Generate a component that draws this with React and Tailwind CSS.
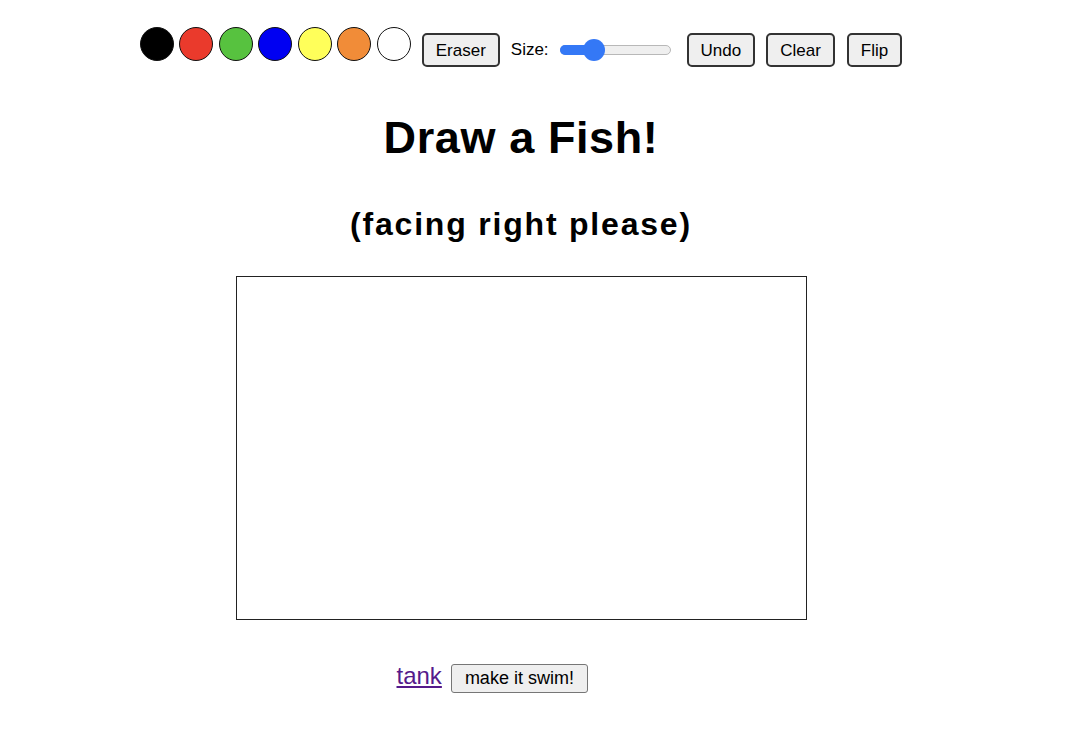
const COLORS = ["#000000", "#ea3a2c", "#57c23f", "#0000f2", "#ffff5a", "#f18c38", "#ffffff"]

const ToolButton = ({ children, className = "" }) => (
  <button
    className={`h-[34px] px-3 bg-[#efefef] border-2 border-[#333] rounded-[5px] text-[17px] leading-none text-black ${className}`}
  >
    {children}
  </button>
)

// thumb position in px from the left of the track
const SizeSlider = ({ offset = 23 }) => (
  <div className="relative ml-[11px] w-[111px] h-[22px] flex items-center">
    <div className="w-full h-[10px] rounded-full bg-[#efefef] border border-[#b8b8b8]" />
    <div className="absolute left-0 h-[10px] rounded-l-full bg-[#3478f6]" style={{ width: offset + 11 }} />
    <div className="absolute w-[22px] h-[22px] rounded-full bg-[#3478f6]" style={{ left: offset }} />
  </div>
)

export default function App() {
  return (
    <div className="w-[1042px] min-h-[731px] bg-white flex flex-col items-center font-['Liberation_Sans',Arial,sans-serif] text-black">
      <div className="flex items-center pt-[27px]">
        <div className="flex gap-[5.5px] mb-[12px]">
          {COLORS.map((c) => (
            <div key={c} className="w-[34px] h-[34px] rounded-full border border-[#111]" style={{ background: c }} />
          ))}
        </div>
        <ToolButton className="ml-[11px]">Eraser</ToolButton>
        <span className="ml-[11px] text-[17px]">Size:</span>
        <SizeSlider offset={23} />
        <ToolButton className="ml-[16px]">Undo</ToolButton>
        <ToolButton className="ml-[11px]">Clear</ToolButton>
        <ToolButton className="ml-[12px]">Flip</ToolButton>
      </div>

      <h1 className="mt-[39px] text-[45px] leading-[52px] font-bold tracking-[0.6px]">Draw a Fish!</h1>
      <h2 className="mt-[40px] text-[32px] leading-[40px] font-bold tracking-[1.8px]">(facing right please)</h2>

      <div className="mt-[32px] w-[571px] h-[344px] border border-[#222] bg-white" />

      <div className="mt-[38px] w-[571px] pl-[161px] flex items-baseline gap-[9px]">
        <a href="#" className="text-[24px] text-[#551a8b] underline">
          tank
        </a>
        <button className="h-[29px] px-[13px] py-[3px] bg-[#efefef] border border-[#767676] rounded-[3px] text-[18px] leading-[21px]">
          make it swim!
        </button>
      </div>
    </div>
  )
}
